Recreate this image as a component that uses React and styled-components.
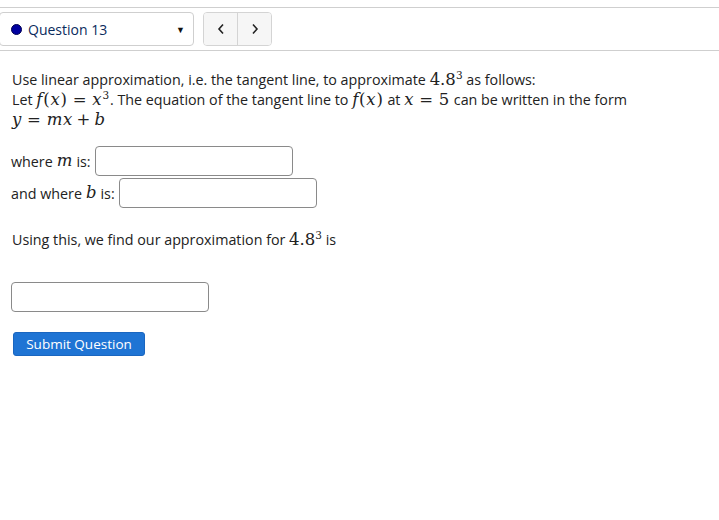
import React from 'react'
import styled, { createGlobalStyle } from 'styled-components'

const Global = createGlobalStyle`
  body {
    margin: 0;
    background: #fff;
    font-family: "Open Sans", "Noto Sans", sans-serif;
    font-size: 14.3px;
    color: #222;
  }
`

const Chevron = ({ dir }) => (
  <svg width="8" height="12" viewBox="0 0 8 12">
    <path
      d={dir === 'left' ? 'M6 1.5 L2 6 L6 10.5' : 'M2 1.5 L6 6 L2 10.5'}
      fill="none"
      stroke="#222"
      strokeWidth="1.6"
    />
  </svg>
)

const App = () => {
  return (
    <>
      <Global />
      <TopBar>
        <Select>
          <Dot />
          <SelectLabel>Question 13</SelectLabel>
          <Caret>▼</Caret>
        </Select>
        <NavGroup>
          <NavButton><Chevron dir="left" /></NavButton>
          <NavButton $last><Chevron dir="right" /></NavButton>
        </NavGroup>
      </TopBar>

      <Body>
        <Para>
          Use linear approximation, i.e. the tangent line, to approximate <M $num>4.8<sup>3</sup></M> as follows:
          <br />
          Let <M><i>f</i>(<i>x</i>)<Rel>=</Rel><i>x</i><sup>3</sup></M>. The equation of the tangent line to <M><i>f</i>(<i>x</i>)</M> at <M><i>x</i><Rel>=</Rel>5</M> can be written in the form
          <br />
          <M><i>y</i><Rel>=</Rel><i>mx</i><Bin>+</Bin><i>b</i></M>
        </Para>

        <Answers>
          <Row>
            where <M $num><i>m</i></M> is: <Input />
          </Row>
          <Row>
            and where <M $num><i>b</i></M> is: <Input />
          </Row>
        </Answers>

        <Para $top={22}>
          Using this, we find our approximation for <M $num>4.8<sup>3</sup></M> is
        </Para>

        <FinalInput />

        <Submit>Submit Question</Submit>
      </Body>
    </>
  )
}

export default App

const TopBar = styled.div`
  margin-top: 7px;
  border-top: 1px solid #cfcfcf;
  border-bottom: 1px solid #cfcfcf;
  padding: 4px 0;
  display: flex;
  align-items: center;
`

const Select = styled.div`
  margin-left: -1px;
  width: 195px;
  height: 34px;
  box-sizing: border-box;
  border: 1px solid #cfcfcf;
  border-radius: 4px;
  display: flex;
  align-items: center;
  padding: 0 8px 0 11px;
`

const Dot = styled.span`
  width: 11px;
  height: 11px;
  border-radius: 50%;
  background: #0000a0;
  border: 1px solid #000050;
  box-sizing: border-box;
`

const SelectLabel = styled.span`
  margin-left: 6px;
  color: #0a2a5c;
  font-size: 14px;
  flex: 1;
`

const Caret = styled.span`
  font-size: 9px;
  color: #111;
`

const NavGroup = styled.div`
  margin-left: 9px;
  display: flex;
  height: 34px;
  border: 1px solid #d4d4d4;
  border-radius: 4px;
  overflow: hidden;
  box-sizing: border-box;
`

const NavButton = styled.div`
  width: 33px;
  display: flex;
  align-items: center;
  justify-content: center;
  background: #f6f6f6;
  border-right: ${p => (p.$last ? 'none' : '1px solid #d4d4d4')};
`

const Body = styled.div`
  padding: 0 12px;
`

const Para = styled.div`
  margin-top: ${p => p.$top ?? 19}px;
  line-height: 20px;
`

const M = styled.span`
  font-family: "DejaVu Serif", "Liberation Serif", serif;
  font-size: 16.5px;
  letter-spacing: ${p => (p.$num ? '0' : '0.8px')};
  line-height: 0;
  i { font-style: italic; }
  sup { font-size: 10.5px; line-height: 0; vertical-align: 6px; }
`

const Rel = styled.span`
  margin: 0 0.3em;
`

const Bin = styled.span`
  margin: 0 0.2em;
`

const Answers = styled.div`
  margin-top: 16px;
  display: flex;
  flex-direction: column;
  gap: 2px;
`

const Row = styled.div`
  display: flex;
  align-items: center;
  gap: 4px;
  margin-left: -1px;
`

const Input = styled.input`
  width: 198px;
  height: 30px;
  box-sizing: border-box;
  border: 1px solid #8a8a8a;
  border-radius: 4px;
  margin: 0;
`

const FinalInput = styled(Input)`
  display: block;
  margin: 32px 0 0 -1px;
`

const Submit = styled.button`
  display: block;
  margin-top: 20px;
  margin-left: 1px;
  width: 132px;
  height: 24px;
  border: 1px solid #1a66c0;
  border-radius: 3px;
  background: #1f74d4;
  color: #fff;
  font-family: "Open Sans", "Noto Sans", sans-serif;
  font-size: 13.5px;
  padding: 0;
`
